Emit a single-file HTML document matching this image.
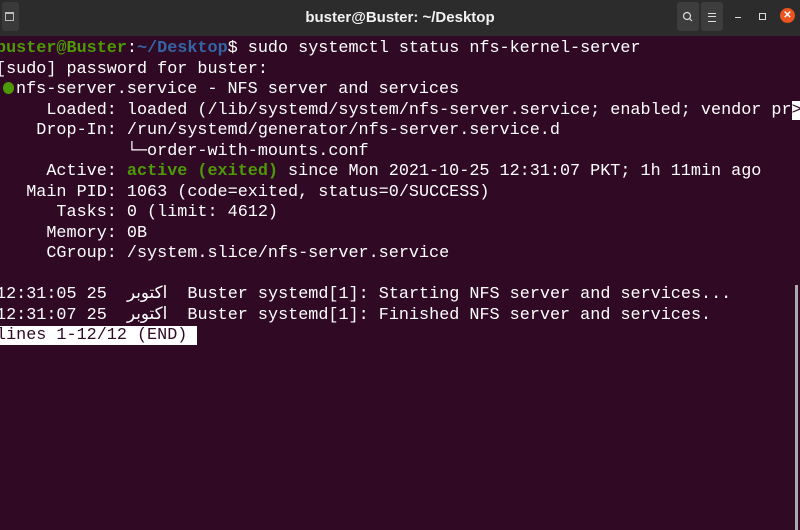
<!DOCTYPE html>
<html><head><meta charset="utf-8"><style>
html,body{margin:0;padding:0;width:800px;height:530px;overflow:hidden;background:#300a24;}
.tb{position:absolute;left:0;top:0;width:800px;height:36px;background:#2c2c2c;}
.title{position:absolute;left:0;width:800px;top:0;font:bold 15px "Liberation Sans",sans-serif;line-height:36px;text-align:center;color:#f2f2f2;}
.btn{position:absolute;top:2px;width:22px;height:29px;background:#3d3d3d;border-radius:3px;}
.term{position:absolute;left:-4px;top:39px;font:16.8px "Liberation Mono","DejaVu Sans",monospace;line-height:20.5px;color:#fff;white-space:pre;}
.g{color:#4e9a06;font-weight:bold}.b{color:#3465a4;font-weight:bold}.gr{color:#4e9a06;font-weight:bold}
.inv{background:#fff;color:#300a24}
.dotw{display:inline-block;width:20px;height:12px;position:relative;vertical-align:-1px}
.dot{position:absolute;left:7px;top:0;width:11px;height:12px;border-radius:50%;background:#4e9a06}
.ar{display:inline-block;width:60.5px;text-align:center;direction:rtl}
.sb{position:absolute;left:795px;top:285px;width:3px;height:245px;background:#aaa;}
</style></head><body>
<div class="tb">
<div class="btn" style="left:2px;width:17px;background:#3a3a3a"></div>
<div style="position:absolute;left:5px;top:12px;width:7px;height:6px;border:1px solid #bbb;border-top-width:2px"></div>
<div class="title">buster@Buster: ~/Desktop</div>
<div class="btn" style="left:677px"></div>
<svg style="position:absolute;left:680px;top:9px" width="16" height="16"><circle cx="7" cy="7" r="3.5" fill="none" stroke="#ddd" stroke-width="1.2"/><line x1="9.5" y1="9.5" x2="12" y2="12" stroke="#ddd" stroke-width="1.2"/></svg>
<div class="btn" style="left:701px"></div>
<div style="position:absolute;left:708px;top:13px;width:8px;height:7px;border-top:1px solid #ddd;border-bottom:1px solid #ddd"></div><div style="position:absolute;left:708px;top:16px;width:8px;height:1px;background:#ddd"></div>
<div style="position:absolute;left:735px;top:17px;width:6px;height:1px;background:#ddd"></div>
<div style="position:absolute;left:759px;top:13px;width:5px;height:5px;border:1px solid #ddd"></div>
<div style="position:absolute;left:780px;top:8px;width:15px;height:15px;border-radius:50%;background:#e95420;color:#fff;font:bold 10px/15px 'Liberation Sans',sans-serif;text-align:center">✕</div>
</div>
<div class="term"><span class="g">buster@Buster</span>:<span class="b">~/Desktop</span>$ sudo systemctl status nfs-kernel-server
[sudo] password for buster: 
<span class="dotw"><span class="dot"></span></span>nfs-server.service - NFS server and services
     Loaded: loaded (/lib/systemd/system/nfs-server.service; enabled; vendor pr<span class="inv">&gt;</span>
    Drop-In: /run/systemd/generator/nfs-server.service.d
             └─order-with-mounts.conf
     Active: <span class="gr">active (exited)</span> since Mon 2021-10-25 12:31:07 PKT; 1h 11min ago
   Main PID: 1063 (code=exited, status=0/SUCCESS)
      Tasks: 0 (limit: 4612)
     Memory: 0B
     CGroup: /system.slice/nfs-server.service

12:31:05 25 <span class="ar">اكتوبر</span> Buster systemd[1]: Starting NFS server and services...
12:31:07 25 <span class="ar">اكتوبر</span> Buster systemd[1]: Finished NFS server and services.
<span class="inv">lines 1-12/12 (END) </span></div>
<div class="sb"></div>
</body></html>
